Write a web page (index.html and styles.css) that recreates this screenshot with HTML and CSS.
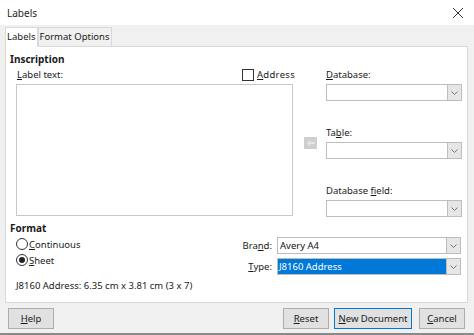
FILE: index.html
```html
<!DOCTYPE html>
<html>
<head>
<meta charset="utf-8">
<link rel="stylesheet" href="styles.css">
</head>
<body>
<div class="window">
  <div class="titlebar">
    <span class="title">Labels</span>
    <svg class="close" width="12" height="12" viewBox="0 0 12 12"><path d="M1 1 L11 11 M11 1 L1 11" stroke="#333" stroke-width="1" fill="none"/></svg>
  </div>
  <div class="body">
    <div class="tabs">
      <div class="tab active">Labels</div>
      <div class="tab">Format Options</div>
    </div>
    <div class="panel">
      <div class="top">
        <div class="leftcol">
          <div class="heading">Inscription</div>
          <div class="labelrow">
            <span class="lbl"><u>L</u>abel text:</span>
            <span class="check"><span class="box"></span><u>A</u>ddress</span>
          </div>
          <div class="textarea"></div>
        </div>
        <div class="midcol">
          <div class="insert"><svg width="8" height="6" viewBox="0 0 8 6"><path d="M0 3 L3 0 L3 2 L8 2 L8 4 L3 4 L3 6 Z" fill="#e6e6e6"/></svg></div>
        </div>
        <div class="rightcol">
          <div class="flabel"><u>D</u>atabase:</div>
          <div class="combo"><span class="val"></span><span class="arrow"><svg width="7" height="4" viewBox="0 0 7 4"><path d="M0.5 0.5 L3.5 3.5 L6.5 0.5" stroke="#777" fill="none"/></svg></span></div>
          <div class="flabel gap">Ta<u>b</u>le:</div>
          <div class="combo"><span class="val"></span><span class="arrow"><svg width="7" height="4" viewBox="0 0 7 4"><path d="M0.5 0.5 L3.5 3.5 L6.5 0.5" stroke="#777" fill="none"/></svg></span></div>
          <div class="flabel gap">Database <u>f</u>ield:</div>
          <div class="combo"><span class="val"></span><span class="arrow"><svg width="7" height="4" viewBox="0 0 7 4"><path d="M0.5 0.5 L3.5 3.5 L6.5 0.5" stroke="#777" fill="none"/></svg></span></div>
        </div>
      </div>
      <div class="format">
        <div class="fleft">
          <div class="heading">Format</div>
          <div class="radio"><span class="circle"></span><u>C</u>ontinuous</div>
          <div class="radio"><span class="circle on"></span><u>S</u>heet</div>
          <div class="info">J8160 Address: 6.35 cm x 3.81 cm (3 x 7)</div>
        </div>
        <div class="fright">
          <div class="brow">
            <span class="blabel">Bra<u>n</u>d:</span>
            <div class="combo wide"><span class="val">Avery A4</span><span class="arrow"><svg width="7" height="4" viewBox="0 0 7 4"><path d="M0.5 0.5 L3.5 3.5 L6.5 0.5" stroke="#777" fill="none"/></svg></span></div>
          </div>
          <div class="brow">
            <span class="blabel"><u>T</u>ype:</span>
            <div class="combo wide"><span class="val sel">J8160 Address</span><span class="arrow"><svg width="7" height="4" viewBox="0 0 7 4"><path d="M0.5 0.5 L3.5 3.5 L6.5 0.5" stroke="#777" fill="none"/></svg></span></div>
          </div>
        </div>
      </div>
    </div>
    <div class="footer">
      <button class="btn"><u>H</u>elp</button>
      <div class="spacer"></div>
      <button class="btn"><u>R</u>eset</button>
      <button class="btn default"><u>N</u>ew Document</button>
      <button class="btn"><u>C</u>ancel</button>
    </div>
  </div>
</div>
</body>
</html>
```
FILE: styles.css
```css
* { box-sizing: border-box; }
html, body { margin: 0; padding: 0; }
body {
  width: 474px;
  height: 335px;
  overflow: hidden;
  font-family: "Noto Sans", sans-serif;
  font-size: 9.5px;
  color: #1a1a1a;
  background: #fff;
}
u { text-decoration: underline; text-underline-offset: 1px; }
.window {
  width: 474px;
  height: 335px;
  display: flex;
  flex-direction: column;
  border-bottom: 2px solid #8a8a8a;
}
.titlebar {
  height: 25px;
  flex: none;
  display: flex;
  align-items: center;
  justify-content: space-between;
  padding: 0 10px 0 7px;
  background: #fff;
}
.title { color: #222; font-size: 10px; }
.body {
  flex: 1;
  background: #f0f0f0;
  display: flex;
  flex-direction: column;
}
.tabs {
  height: 21px;
  flex: none;
  display: flex;
  align-items: flex-end;
  padding-left: 5px;
}
.tab {
  height: 19px;
  line-height: 18px;
  padding: 0 1px;
  border: 1px solid #d9d9d9;
  border-bottom: none;
  background: #f0f0f0;
  position: relative;
  white-space: nowrap;
  font-size: 9.5px;
}
.tab.active {
  background: #fff;
  height: 20px;
  margin-bottom: -1px;
  z-index: 1;
}
.panel {
  margin: 0 6px 0 5px;
  height: 257px;
  background: #fff;
  border: 1px solid #d9d9d9;
  display: flex;
  flex-direction: column;
}
.top {
  display: flex;
  height: 174px;
}
.leftcol {
  width: 292px;
  padding-left: 4px;
  padding-top: 4px;
}
.heading {
  font-weight: bold;
  line-height: 16px;
  font-size: 10px;
}
.labelrow {
  height: 16px;
  line-height: 16px;
  display: flex;
  justify-content: space-between;
  padding-left: 7px;
}
.check { display: flex; align-items: center; margin-right: 3px; white-space: nowrap; letter-spacing: 0.3px; }
.box {
  width: 12px; height: 12px;
  border: 1px solid #333;
  background: #fff;
  margin-right: 3px;
  flex: none;
}
.textarea {
  margin: 1px 0 0 6px;
  width: 277px;
  height: 132px;
  border: 1px solid #c8c8c8;
  background: #fff;
}
.midcol {
  width: 28px;
  padding-top: 90px;
  padding-left: 6px;
}
.insert {
  width: 13px;
  height: 12px;
  background: #cfcfcf;
  display: flex;
  align-items: center;
  justify-content: center;
}
.rightcol {
  width: 136px;
  padding-top: 20px;
}
.flabel {
  line-height: 16px;
  height: 16px;
  margin-bottom: 1px;
}
.flabel.gap { margin-top: 24px; }
.combo {
  height: 17px;
  border: 1px solid #bdbdbd;
  background: #fff;
  display: flex;
}
.combo .val {
  flex: 1;
  line-height: 15px;
  padding-left: 2px;
  color: #111;
  white-space: nowrap;
}
.combo .val.sel {
  background: #0078d7;
  color: #fff;
  padding-left: 1px;
}
.arrow {
  width: 14px;
  flex: none;
  background: #e6e6e6;
  border-left: 1px solid #bdbdbd;
  display: flex;
  align-items: center;
  justify-content: center;
}
.format {
  display: flex;
  padding-left: 4px;
}
.fleft { width: 221px; }
.format .heading { line-height: 15px; height: 15px; }
.radio {
  display: flex;
  align-items: center;
  height: 16px;
  padding-left: 6px;
}
.circle {
  width: 12px; height: 12px;
  border: 1px solid #333;
  border-radius: 50%;
  margin-right: 1px;
  flex: none;
  display: flex;
  align-items: center;
  justify-content: center;
}
.circle.on::after {
  content: "";
  width: 6px; height: 6px;
  border-radius: 50%;
  background: #222;
}
.info {
  margin-top: 10px;
  padding-left: 6px;
  line-height: 15px;
  white-space: nowrap;
}
.fright {
  padding-top: 16px;
  width: 231px;
}
.brow {
  display: flex;
  align-items: center;
  height: 17px;
  margin-bottom: 4px;
}
.blabel {
  width: 46px;
  text-align: right;
  padding-right: 5px;
  flex: none;
  white-space: nowrap;
}
.combo.wide { width: 184px; flex: none; height: 17px; }
.footer {
  display: flex;
  padding: 5px 9px 0 8px;
}
.spacer { flex: 1; }
.btn {
  font-family: inherit;
  font-size: 9.5px;
  color: #1a1a1a;
  height: 21px;
  padding: 0;
  background: #e1e1e1;
  border: 1px solid #adadad;
  width: 46px;
  white-space: nowrap;
}
.btn.default {
  width: 78px;
  border: 1px solid #0078d7;
  margin: 0 7px 0 5px;
}
```
